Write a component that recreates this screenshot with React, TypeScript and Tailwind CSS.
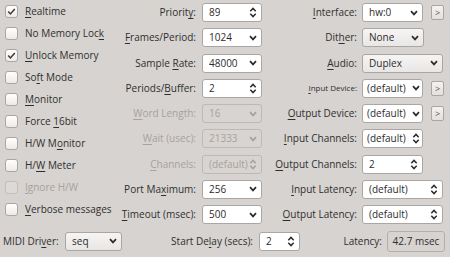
import React from "react";

// "&" marks the mnemonic letter, like a Qt label
const Mn = ({ text }: { text: string }) => {
  const i = text.indexOf("&");
  if (i < 0) return <>{text}</>;
  return (
    <>
      {text.slice(0, i)}
      <span className="underline underline-offset-[2px] decoration-1">{text[i + 1]}</span>
      {text.slice(i + 2)}
    </>
  );
};

const Chevron = () => (
  <svg width="8" height="6" viewBox="0 0 8 6" className="shrink-0">
    <path d="M1 1.2 4 4.4 7 1.2" fill="none" stroke="currentColor" strokeWidth="1.7" />
  </svg>
);

const Spin = () => (
  <svg width="8" height="11" viewBox="0 0 8 11" className="shrink-0">
    <path d="M1.3 4.2 4 1.4 6.7 4.2M1.3 6.8 4 9.6 6.7 6.8" fill="none" stroke="currentColor" strokeWidth="1.5" />
  </svg>
);

type FieldProps = {
  value: string;
  kind: "combo" | "spin" | "button";
  disabled?: boolean;
  className?: string;
};

const Field = ({ value, kind, disabled, className }: FieldProps) => {
  let look = "bg-white border-[#aaa6a3] text-[#2c2c2c]";
  if (kind === "button") look = "bg-gradient-to-b from-[#f6f5f4] to-[#e9e7e5] border-[#aaa6a3] text-[#2c2c2c]";
  if (disabled) look = "bg-[#d8d4d1] border-[#bdb9b6] text-[#a6a29f]";
  return (
    <div className={`h-[19px] flex items-center justify-between border rounded-[3px] pl-[6px] pr-[4px] shrink-0 ${look} ${className ?? ""}`}>
      <span className="truncate">{value}</span>
      {kind === "spin" ? <Spin /> : <Chevron />}
    </div>
  );
};

const Arrow = () => (
  <div className="w-[13px] h-[15px] ml-[8px] flex items-center justify-center rounded-[2px] border border-[#aaa6a3] bg-gradient-to-b from-[#f4f3f2] to-[#e3e0de] text-[#555] text-[9px] leading-none">
    &gt;
  </div>
);

const Check = ({ label, checked, disabled }: { label: string; checked?: boolean; disabled?: boolean }) => (
  <div className="h-[22px] flex items-center gap-[7px]">
    <div
      className={`w-[13px] h-[13px] rounded-[3px] border flex items-center justify-center ${
        disabled ? "border-[#c2beba] bg-[#dcd9d6]" : "border-[#aaa6a3] bg-gradient-to-b from-white to-[#ecebe9]"
      }`}
    >
      {checked && (
        <svg width="11" height="11" viewBox="0 0 11 11">
          <path d="M2.2 5.6 4.4 8 8.8 3" fill="none" stroke="#3a3a3a" strokeWidth="1.5" />
        </svg>
      )}
    </div>
    <span className={disabled ? "text-[#a6a29f]" : ""}>
      <Mn text={label} />
    </span>
  </div>
);

const midRows: { label: string; field: FieldProps }[] = [
  { label: "Priorit&y:", field: { value: "89", kind: "spin" } },
  { label: "&Frames/Period:", field: { value: "1024", kind: "combo" } },
  { label: "Sample &Rate:", field: { value: "48000", kind: "combo" } },
  { label: "Periods/&Buffer:", field: { value: "2", kind: "spin" } },
  { label: "&Word Length:", field: { value: "16", kind: "combo", disabled: true } },
  { label: "&Wait (usec):", field: { value: "21333", kind: "combo", disabled: true } },
  { label: "&Channels:", field: { value: "(default)", kind: "spin", disabled: true } },
  { label: "Port Ma&ximum:", field: { value: "256", kind: "combo" } },
  { label: "&Timeout (msec):", field: { value: "500", kind: "combo" } },
];

export default function App() {
  return (
    <div className="w-[450px] h-[257px] bg-[#d7d3d0] text-[#2f2f2f] text-[10px] overflow-hidden flex flex-col" style={{ fontFamily: '"Open Sans", "Noto Sans", sans-serif' }}>
      <div className="flex h-[230px]">
        {/* options */}
        <div className="w-[118px] pl-[5px] flex flex-col">
          <Check label="&Realtime" checked />
          <Check label="No Memory Loc&k" />
          <Check label="&Unlock Memory" checked />
          <Check label="So&ft Mode" />
          <Check label="&Monitor" />
          <Check label="Force &16bit" />
          <Check label="H/W M&onitor" />
          <Check label="H/&W Meter" />
          <Check label="&Ignore H/W" disabled />
          <Check label="&Verbose messages" />
        </div>

        {/* timing */}
        <div className="w-[144px] pt-[3px] flex flex-col gap-[6.25px]">
          {midRows.map((r) => (
            <div key={r.label} className="h-[19px] flex items-center">
              <span className={`w-[78px] text-right whitespace-nowrap ${r.field.disabled ? "text-[#a6a29f]" : ""}`}>
                <Mn text={r.label} />
              </span>
              <Field {...r.field} className="ml-[6px] w-[60px]" />
            </div>
          ))}
        </div>

        {/* devices */}
        <div className="flex-1 pt-[3px] flex flex-col gap-[6.25px]">
          <div className="h-[19px] flex items-center">
            <span className="w-[95px] text-right"><Mn text="&Interface:" /></span>
            <Field value="hw:0" kind="combo" className="ml-[5px] w-[61px]" />
            <Arrow />
          </div>
          <div className="h-[19px] flex items-center">
            <span className="w-[95px] text-right"><Mn text="Dit&her:" /></span>
            <Field value="None" kind="button" className="ml-[5px] w-[62px]" />
          </div>
          <div className="h-[19px] flex items-center">
            <span className="w-[95px] text-right"><Mn text="&Audio:" /></span>
            <Field value="Duplex" kind="button" className="ml-[5px] w-[81px]" />
          </div>
          <div className="h-[19px] flex items-center">
            <span className="w-[95px] text-right text-[8px]"><Mn text="&Input Device:" /></span>
            <Field value="(default)" kind="combo" className="ml-[5px] w-[61px] !pl-[4px] !pr-[2px]" />
            <Arrow />
          </div>
          <div className="h-[19px] flex items-center">
            <span className="w-[95px] text-right whitespace-nowrap"><Mn text="&Output Device:" /></span>
            <Field value="(default)" kind="combo" className="ml-[5px] w-[61px] !pl-[4px] !pr-[2px]" />
            <Arrow />
          </div>
          <div className="h-[19px] flex items-center">
            <span className="w-[95px] text-right whitespace-nowrap"><Mn text="&Input Channels:" /></span>
            <Field value="(default)" kind="spin" className="ml-[5px] w-[61px] !pl-[4px] !pr-[2px]" />
          </div>
          <div className="h-[19px] flex items-center">
            <span className="w-[95px] text-right whitespace-nowrap"><Mn text="&Output Channels:" /></span>
            <Field value="2" kind="spin" className="ml-[5px] w-[61px]" />
          </div>
          <div className="h-[19px] flex items-center">
            <span className="w-[95px] text-right whitespace-nowrap"><Mn text="&Input Latency:" /></span>
            <Field value="(default)" kind="spin" className="ml-[5px] w-[81px]" />
          </div>
          <div className="h-[19px] flex items-center">
            <span className="w-[95px] text-right whitespace-nowrap"><Mn text="&Output Latency:" /></span>
            <Field value="(default)" kind="spin" className="ml-[5px] w-[81px]" />
          </div>
        </div>
      </div>

      {/* bottom row */}
      <div className="h-[22px] flex items-center">
        <div className="w-[122px] pl-[3px] flex items-center">
          <span className="whitespace-nowrap"><Mn text="MIDI Dri&ver:" /></span>
          <Field value="seq" kind="button" className="ml-auto w-[57px]" />
        </div>
        <div className="w-[178px] flex items-center justify-end">
          <span className="whitespace-nowrap"><Mn text="Start De&lay (secs):" /></span>
          <Field value="2" kind="spin" className="ml-[6px] w-[41px] !bg-white" />
        </div>
        <div className="flex-1 pr-[5px] flex items-center justify-end">
          <span>Latency:</span>
          <div className="ml-[5px] w-[58px] h-[21px] flex items-center justify-center rounded-[3px] border border-[#b3afac]">
            42.7 msec
          </div>
        </div>
      </div>
    </div>
  );
}
